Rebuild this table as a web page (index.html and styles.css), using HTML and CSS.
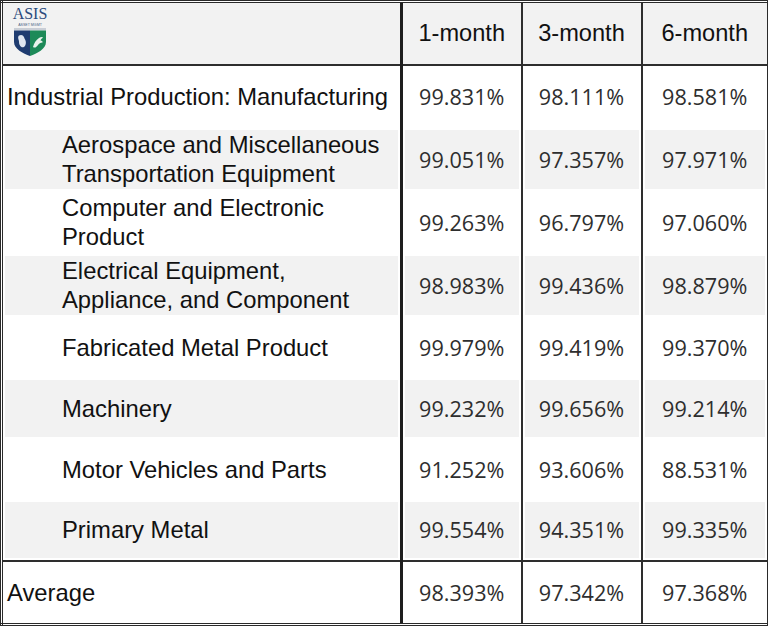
FILE: index.html
```html
<!DOCTYPE html>
<html lang="en">
<head>
<meta charset="utf-8">
<title>Industrial Production Accuracy</title>
<link rel="stylesheet" href="styles.css">
</head>
<body>
<table class="grid">
  <colgroup>
    <col class="c-label">
    <col class="c-num">
    <col class="c-num">
    <col class="c-last">
  </colgroup>
  <thead>
    <tr class="head">
      <th class="logo-cell">
        <svg class="logo" width="36" height="52" viewBox="0 0 36 52" aria-label="ASIS logo">
          <text x="18" y="13" text-anchor="middle" class="logo-word">ASIS</text>
          <text x="18" y="19.5" text-anchor="middle" class="logo-tag">ASSET MGMT</text>
          <rect x="2" y="22" width="32" height="2.5" fill="#c9ced6"/>
          <path d="M2 24.5 H18 V50 C11 47.5 2 43 2 36 Z" fill="#1f3c70"/>
          <path d="M18 24.5 H34 V36 C34 43 25 47.5 18 50 Z" fill="#1d8a58"/>
          <path d="M7 29.5 C10 28 12 30 12.5 32.5 C14 34.5 14.5 37.5 13 40 C11.5 42 9 41.5 8 39.5 C6.5 37.5 7.5 35.5 6.5 33.5 C6 31.5 6 30.5 7 29.5 Z" fill="#dfe6f0"/>
          <path d="M21 41 C22 37 24 34 27 32 C28.5 31 30.5 30.5 31 31.5 C30 32.5 29 33 28.5 34.5 C30 34.5 31 35.5 30.5 36.5 C28.5 36.5 27 37.5 26 39 C24.5 41 23 42.5 21 41 Z" fill="#e8f3ec"/>
        </svg>
      </th>
      <th>1-month</th>
      <th>3-month</th>
      <th>6-month</th>
    </tr>
  </thead>
  <tbody>
    <tr class="tall">
      <td class="label">Industrial Production: Manufacturing</td>
      <td class="num">99.831%</td><td class="num">98.111%</td><td class="num">98.581%</td>
    </tr>
    <tr class="tall shade">
      <td class="label sub">Aerospace and Miscellaneous Transportation Equipment</td>
      <td class="num">99.051%</td><td class="num">97.357%</td><td class="num">97.971%</td>
    </tr>
    <tr class="tall">
      <td class="label sub">Computer and Electronic Product</td>
      <td class="num">99.263%</td><td class="num">96.797%</td><td class="num">97.060%</td>
    </tr>
    <tr class="tall shade">
      <td class="label sub">Electrical Equipment, Appliance, and Component</td>
      <td class="num">98.983%</td><td class="num">99.436%</td><td class="num">98.879%</td>
    </tr>
    <tr>
      <td class="label sub">Fabricated Metal Product</td>
      <td class="num">99.979%</td><td class="num">99.419%</td><td class="num">99.370%</td>
    </tr>
    <tr class="shade">
      <td class="label sub">Machinery</td>
      <td class="num">99.232%</td><td class="num">99.656%</td><td class="num">99.214%</td>
    </tr>
    <tr>
      <td class="label sub">Motor Vehicles and Parts</td>
      <td class="num">91.252%</td><td class="num">93.606%</td><td class="num">88.531%</td>
    </tr>
    <tr class="shade">
      <td class="label sub">Primary Metal</td>
      <td class="num">99.554%</td><td class="num">94.351%</td><td class="num">99.335%</td>
    </tr>
  </tbody>
  <tfoot>
    <tr class="avg">
      <td class="label">Average</td>
      <td class="num">98.393%</td><td class="num">97.342%</td><td class="num">97.368%</td>
    </tr>
  </tfoot>
</table>
</body>
</html>
```
FILE: styles.css
```css
html, body {
  margin: 0;
  padding: 0;
  background: #ffffff;
}

.grid {
  width: 767px;
  border-collapse: collapse;
  table-layout: fixed;
  border: 3px double #2a2a2a;
  font-family: "Liberation Sans", Arial, sans-serif;
  color: #111;
}

.c-label { width: 400px; }
.c-num { width: 120px; }
.c-last { width: 127px; }

.grid th,
.grid td {
  padding: 0;
  border-left: 2px solid #2e2e2e;
  border-right: 2px solid #2e2e2e;
}

.grid th:first-child,
.grid td:first-child {
  border-right: 3px solid #1e1e1e;
}

.head {
  height: 63px;
}

.head th {
  background: #f2f2f2;
  font-weight: normal;
  font-size: 23.6px;
  text-align: center;
  border-bottom: 2px solid #2e2e2e;
  color: #111;
}

.grid .logo-cell {
  text-align: left;
  vertical-align: top;
  padding: 3px 0 0 9px;
}

.logo {
  display: block;
}

.logo-word {
  font-family: "Liberation Serif", "Times New Roman", serif;
  font-size: 16px;
  fill: #2c4a7c;
}

.logo-tag {
  font-family: "Liberation Sans", Arial, sans-serif;
  font-size: 3.6px;
  fill: #4a5f85;
}

tbody tr {
  height: 61px;
}

tbody tr.tall {
  height: 63px;
}

.shade td {
  background: #f2f2f2;
  box-shadow: inset 0 0 0 2px #ffffff;
}

.grid .label {
  font-size: 23.8px;
  line-height: 29px;
  padding-left: 4px;
  color: #111;
}

.grid .label.sub {
  padding-left: 59px;
  padding-right: 16px;
}

.grid .num {
  font-family: "Open Sans", "DejaVu Sans", sans-serif;
  font-size: 21.6px;
  text-align: center;
  color: #2e2e2e;
}

.avg {
  height: 64px;
}

.avg td {
  border-top: 2px solid #2e2e2e;
}
```
